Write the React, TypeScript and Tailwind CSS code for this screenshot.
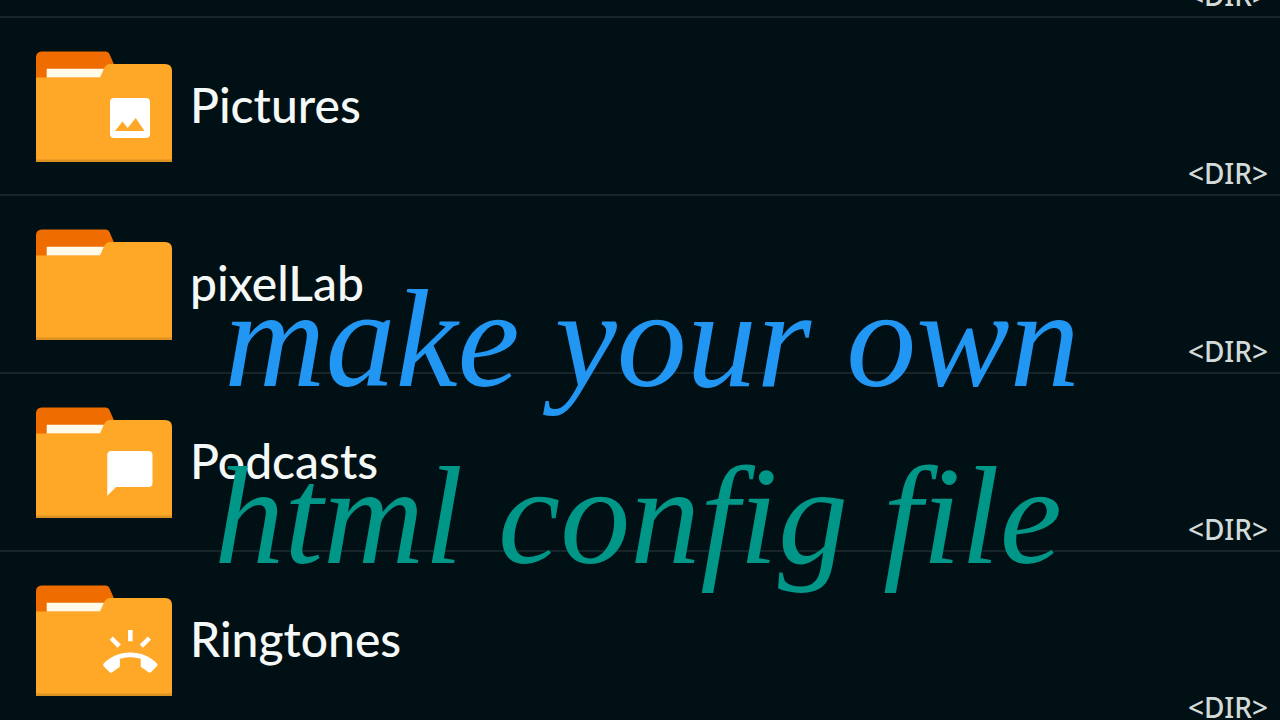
import type { ReactNode } from "react";

type FolderKind = "image" | "plain" | "chat" | "ring";

type Folder = {
  name: string;
  kind: FolderKind;
};

const FOLDERS: Folder[] = [
  { name: "Pictures", kind: "image" },
  { name: "pixelLab", kind: "plain" },
  { name: "Podcasts", kind: "chat" },
  { name: "Ringtones", kind: "ring" },
];

// White glyph drawn on the front of each folder
const GLYPHS: Record<FolderKind, ReactNode> = {
  plain: null,
  image: (
    <>
      <rect x="74" y="47" width="40" height="40" rx="4" fill="#fff" />
      <path d="M79 80l7.5-9.5 5.2 6.5 8-10 8.8 13z" fill="#ffa726" />
    </>
  ),
  chat: <path d="M75 44h37.5a4 4 0 0 1 4 4v28a4 4 0 0 1-4 4H80l-8.700 8.700V48a4 4 0 0 1 3.700-4z" fill="#fff" />,
  ring: (
    <path
      transform="translate(67.2 40.5) scale(2.26)"
      fill="#fff"
      d="M23.71 16.67C20.66 13.78 16.54 12 12 12 7.46 12 3.34 13.78.29 16.67c-.18.18-.29.43-.29.71 0 .28.11.53.29.71l2.48 2.48c.18.18.43.29.71.29.27 0 .52-.11.7-.28.79-.74 1.69-1.36 2.66-1.85.33-.16.56-.5.56-.9v-3.1c1.45-.48 3-.73 4.6-.73s3.15.25 4.6.72v3.1c0 .39.23.74.56.9.98.49 1.87 1.12 2.66 1.85.18.18.43.28.7.28.28 0 .53-.11.71-.29l2.48-2.48c.18-.18.29-.43.29-.71 0-.28-.11-.53-.29-.71zM21.16 6.26l-1.41-1.41-3.56 3.55 1.41 1.41s3.45-3.52 3.56-3.55zM13 2h-2v5h2V2zM6.4 9.81L7.81 8.4 4.26 4.84 2.84 6.26c.11.03 3.56 3.55 3.56 3.55z"
    />
  ),
};

function FolderIcon({ kind }: { kind: FolderKind }) {
  return (
    <svg viewBox="0 0 136 111" className="h-[111px] w-[136px] shrink-0" aria-hidden="true">
      <path d="M0 30V6a5.500 5.500 0 0 1 5.500-5.500H70q2.500 0 3.500 2.500l4.500 10.500V30z" fill="#ef6c00" />
      <path d="M10.700 17.700h58v9h-58z" fill="#fffaea" />
      <path d="M0 26.500h64l4-9q2-4.500 6-4.500h55q7 0 7 7v91H0z" fill="#ffa726" />
      <path d="M0 108.500h136v2.500H0z" fill="#dc9222" />
      {GLYPHS[kind]}
    </svg>
  );
}

function DirTag() {
  return (
    <span className="pb-0.5 font-['Noto_Sans',sans-serif] text-[28px] leading-[38px] font-medium text-[#d3dbd9]">
      &lt;DIR&gt;
    </span>
  );
}

function FolderRow({ folder }: { folder: Folder }) {
  return (
    <li className="flex h-[178px] shrink-0 items-center border-b-2 border-[#17252a] pr-3 pl-9">
      <FolderIcon kind={folder.kind} />
      <span className="ml-[18px] flex-1 pb-0.5 font-[Lato,sans-serif] text-5xl font-medium text-[#f4f8f7]">
        {folder.name}
      </span>
      <span className="flex self-end">
        <DirTag />
      </span>
    </li>
  );
}

export default function App() {
  return (
    <main className="relative h-screen overflow-hidden bg-[#001015]">
      <ul className="flex flex-col">
        {/* Bottom edge of the row scrolled out of view */}
        <li className="flex h-[18px] shrink-0 items-end justify-end overflow-hidden border-b-2 border-[#17252a] pr-3">
          <DirTag />
        </li>
        {FOLDERS.map((folder) => (
          <FolderRow key={folder.name} folder={folder} />
        ))}
      </ul>

      {/* Title over the list */}
      <h1 className="absolute inset-x-0 top-[250px] pr-1 text-center font-['Liberation_Serif',serif] text-[140px] leading-[177px] whitespace-nowrap italic [font-variant-ligatures:none]">
        <span className="block pl-7 text-[#2196f3]">make your own</span>
        <span className="block text-[#009688]">html config file</span>
      </h1>
    </main>
  );
}
